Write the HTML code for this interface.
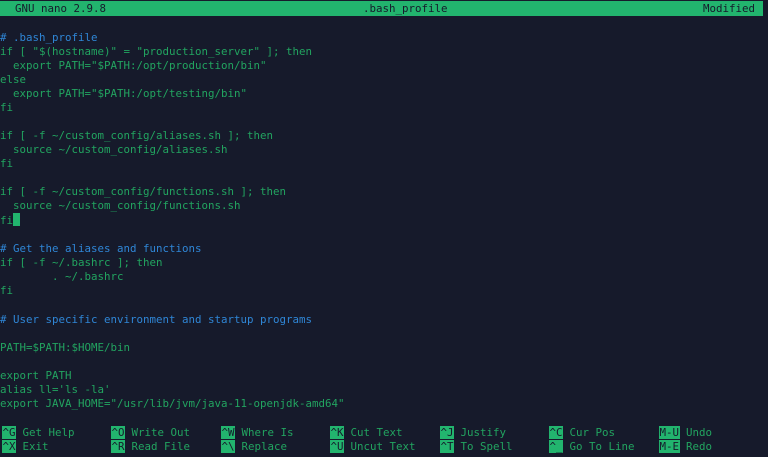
<!DOCTYPE html>
<html><head><meta charset="utf-8"><style>
html,body{margin:0;padding:0;background:#161a2b;width:768px;height:457px;overflow:hidden}
body{font-family:"DejaVu Sans Mono","Liberation Mono",monospace;font-size:10.8px;color:#22a460;position:relative}
.r{position:absolute;left:0;height:14px;line-height:14px;white-space:pre}
.c{color:#2f86d6}
#hd{position:absolute;left:0;top:1px;width:763px;height:15px;background:#22b46e;color:#161a2b}
#hd span{position:absolute;top:0;line-height:15px;white-space:pre}
.cur{display:inline-block;width:7px;height:13px;background:#22b46e;vertical-align:-2px}
.s{position:absolute;white-space:pre;line-height:14px;height:14px}
.k{background:#22b46e;color:#161a2b;padding:0 0.5px}
</style></head><body>
<div id="hd"><span style="left:15px">GNU nano 2.9.8</span><span style="left:363px">.bash_profile</span><span style="left:703px">Modified</span></div>
<div class="r c" style="top:31px"># .bash_profile</div>
<div class="r" style="top:45px">if [ "$(hostname)" = "production_server" ]; then</div>
<div class="r" style="top:59px">  export PATH="$PATH:/opt/production/bin"</div>
<div class="r" style="top:73px">else</div>
<div class="r" style="top:87px">  export PATH="$PATH:/opt/testing/bin"</div>
<div class="r" style="top:101px">fi</div>
<div class="r" style="top:129px">if [ -f ~/custom_config/aliases.sh ]; then</div>
<div class="r" style="top:143px">  source ~/custom_config/aliases.sh</div>
<div class="r" style="top:157px">fi</div>
<div class="r" style="top:185px">if [ -f ~/custom_config/functions.sh ]; then</div>
<div class="r" style="top:199px">  source ~/custom_config/functions.sh</div>
<div class="r" style="top:213px">fi<span class="cur"></span></div>
<div class="r c" style="top:242px"># Get the aliases and functions</div>
<div class="r" style="top:256px">if [ -f ~/.bashrc ]; then</div>
<div class="r" style="top:270px">        . ~/.bashrc</div>
<div class="r" style="top:284px">fi</div>
<div class="r c" style="top:313px"># User specific environment and startup programs</div>
<div class="r" style="top:341px">PATH=$PATH:$HOME/bin</div>
<div class="r" style="top:369px">export PATH</div>
<div class="r" style="top:383px">alias ll='ls -la'</div>
<div class="r" style="top:397px">export JAVA_HOME="/usr/lib/jvm/java-11-openjdk-amd64"</div>

<div class="s" style="left:2px;top:426px"><span class="k">^G</span> Get Help</div>
<div class="s" style="left:2px;top:440px"><span class="k">^X</span> Exit</div>
<div class="s" style="left:111px;top:426px"><span class="k">^O</span> Write Out</div>
<div class="s" style="left:111px;top:440px"><span class="k">^R</span> Read File</div>
<div class="s" style="left:221px;top:426px"><span class="k">^W</span> Where Is</div>
<div class="s" style="left:221px;top:440px"><span class="k">^\</span> Replace</div>
<div class="s" style="left:330px;top:426px"><span class="k">^K</span> Cut Text</div>
<div class="s" style="left:330px;top:440px"><span class="k">^U</span> Uncut Text</div>
<div class="s" style="left:440px;top:426px"><span class="k">^J</span> Justify</div>
<div class="s" style="left:440px;top:440px"><span class="k">^T</span> To Spell</div>
<div class="s" style="left:549px;top:426px"><span class="k">^C</span> Cur Pos</div>
<div class="s" style="left:549px;top:440px"><span class="k">^_</span> Go To Line</div>
<div class="s" style="left:659px;top:426px"><span class="k">M-U</span> Undo</div>
<div class="s" style="left:659px;top:440px"><span class="k">M-E</span> Redo</div>
</body></html>
